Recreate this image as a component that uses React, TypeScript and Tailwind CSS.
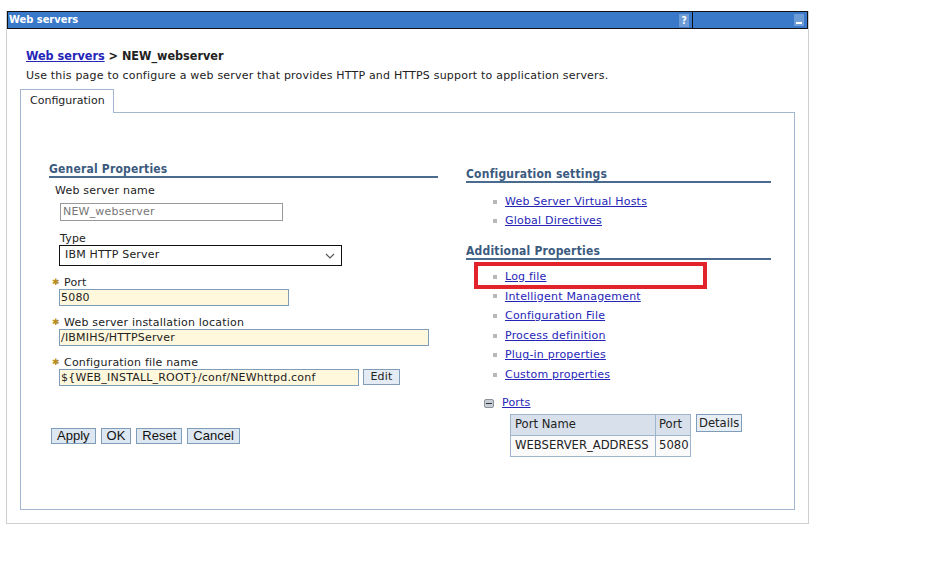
import React from "react";

const ui = { fontFamily: '"DejaVu Sans", Verdana, sans-serif' };
const cond = { fontFamily: '"DejaVu Sans Condensed", "DejaVu Sans", sans-serif' };
const btnFont = { fontFamily: '"Liberation Sans", Arial, sans-serif' };

function Req() {
  return <span className="inline-block w-[15px] pl-[3px] text-[9px] leading-none text-[#b58b1c]">✱</span>;
}

function Bullet() {
  return <span className="inline-block w-[4px] h-[4px] bg-[#b8b8b8] mr-[8px] align-middle" />;
}

function Heading({ children, className = "" }: { children: React.ReactNode; className?: string }) {
  return (
    <div
      style={cond}
      className={`text-[12px] font-bold leading-[14px] text-[#3b5a7e] border-b-2 border-[#4a6a90] ${className}`}
    >
      {children}
    </div>
  );
}

const configLinks = ["Web Server Virtual Hosts", "Global Directives"];
const addLinks = [
  "Log file",
  "Intelligent Management",
  "Configuration File",
  "Process definition",
  "Plug-in properties",
  "Custom properties",
];

function Btn({ children }: { children: React.ReactNode }) {
  return (
    <button
      style={btnFont}
      className="h-[16px] px-[5px] text-[13px] leading-[14px] text-[#111] bg-[#dde7f2] border border-[#7f9db9]"
    >
      {children}
    </button>
  );
}

export default function App() {
  return (
    <div style={ui} className="w-[948px] h-[568px] bg-white pt-[11px] pl-[6px] text-[#222] text-[11px] tracking-[0.2px]">
      <div className="w-[803px] border-x border-b border-[#cfcfcf] pb-[13px]">
        {/* Title bar */}
        <div
          style={cond}
          className="h-[18px] bg-[#3a79c9] border border-[#111] flex items-center text-white text-[11px] font-bold tracking-normal"
        >
          <span className="pl-[1px] flex-1">Web servers</span>
          <span className="w-[10px] h-[13px] bg-[#6c9bd6] text-[10px] leading-[13px] text-center mr-[3px]">?</span>
          <span className="w-[1px] h-full bg-[#111]" />
          <span className="w-[114px] flex justify-end pr-[3px]">
            <span className="w-[10px] h-[12px] bg-[#6c9bd6] flex items-end justify-center pb-[2px]">
              <span className="w-[6px] h-[2px] bg-white" />
            </span>
          </span>
        </div>

        <div className="pl-[13px]">
          <div style={cond} className="pl-[6px] pt-[19px] text-[12.5px] font-bold leading-[16px] tracking-normal">
            <a className="text-[#2525b8] underline">Web servers</a> &gt; NEW_webserver
          </div>
          <div className="pl-[6px] mt-[5px] leading-[14px]">
            Use this page to configure a web server that provides HTTP and HTTPS support to application servers.
          </div>

          {/* Tab */}
          <div className="mt-[5px] flex">
            <div className="w-[94px] h-[24px] border border-b-0 border-[#a3b8d0] bg-white relative top-[1px] leading-[22px] pl-[9px] tracking-normal">
              Configuration
            </div>
          </div>
          <div className="w-[775px] h-[398px] border border-[#a3b8d0] flex">
            {/* Left column */}
            <div className="w-[389px] ml-[28px] pt-[49px]">
              <Heading>General Properties</Heading>
              <div className="mt-[6px] pl-[6px] leading-[14px]">Web server name</div>
              <div className="mt-[5px] ml-[11px] w-[223px] h-[18px] border border-[#999] leading-[16px] pl-[2px] text-[#777]">
                NEW_webserver
              </div>
              <div className="mt-[11px] ml-[11px] leading-[13px]">Type</div>
              <div className="ml-[10px] w-[283px] h-[21px] border border-[#111] flex items-center justify-between pl-[5px] pr-[6px]">
                <span>IBM HTTP Server</span>
                <svg width="10" height="6" viewBox="0 0 10 6">
                  <path d="M1 1 L5 5 L9 1" fill="none" stroke="#555" strokeWidth="1.2" />
                </svg>
              </div>

              <div className="mt-[10px] leading-[13px] flex items-center"><Req />Port</div>
              <div className="ml-[10px] w-[230px] h-[17px] border border-[#7f9db9] bg-[#fff8dc] leading-[15px] pl-[1px]">
                5080
              </div>

              <div className="mt-[10px] leading-[13px] flex items-center"><Req />Web server installation location</div>
              <div className="ml-[10px] w-[370px] h-[17px] border border-[#7f9db9] bg-[#fff8dc] leading-[15px] pl-[1px]">
                /IBMIHS/HTTPServer
              </div>

              <div className="mt-[10px] leading-[13px] flex items-center"><Req />Configuration file name</div>
              <div className="ml-[10px] flex items-start gap-[4px]">
                <div className="w-[300px] h-[17px] border border-[#7f9db9] bg-[#fff8dc] leading-[15px] pl-[1px]">
                  {"${WEB_INSTALL_ROOT}/conf/NEWhttpd.conf"}
                </div>
                <button className="h-[16px] w-[37px] border border-[#7f9db9] bg-[#e4ebf3] text-[11px] leading-[14px]">
                  Edit
                </button>
              </div>

              <div className="mt-[42px] ml-[2px] flex gap-[5px] tracking-normal">
                <Btn>Apply</Btn>
                <Btn>OK</Btn>
                <Btn>Reset</Btn>
                <Btn>Cancel</Btn>
              </div>
            </div>

            {/* Right column */}
            <div className="w-[305px] ml-[28px] pt-[54px]">
              <Heading>Configuration settings</Heading>
              <ul className="mt-[9px] pl-[27px]">
                {configLinks.map((l) => (
                  <li key={l} className="h-[19px] leading-[19px] flex items-center">
                    <Bullet />
                    <a className="text-[#2525b8] underline">{l}</a>
                  </li>
                ))}
              </ul>
              <Heading className="mt-[14px]">Additional Properties</Heading>
              <ul className="mt-[7px] pl-[27px]">
                {addLinks.map((l, i) => (
                  <li key={l} className="relative h-[19.6px] leading-[19.6px] flex items-center">
                    <Bullet />
                    <a className="text-[#2525b8] underline">{l}</a>
                    {i === 0 && (
                      <span className="absolute left-[-19px] top-[-5px] w-[233px] h-[27px] border-[4px] border-[#e3232b]" />
                    )}
                  </li>
                ))}
              </ul>

              <div className="mt-[11px] ml-[18px] h-[16px] flex items-center">
                <span className="w-[10px] h-[9px] bg-[#c9ced6] border border-[#8b929c] rounded-[2px] flex items-center justify-center">
                  <span className="w-[6px] h-[1px] bg-[#333]" />
                </span>
                <a className="ml-[8px] text-[#2525b8] underline">Ports</a>
              </div>
              <div className="mt-[2px] ml-[44px] flex items-start gap-[5px] tracking-normal">
                <table className="border-collapse text-[11.6px]">
                  <tbody>
                    <tr className="bg-[#d8e0eb]">
                      <td className="w-[145px] h-[21px] border border-[#9fb4cd] pl-[4px] pt-[1px]">Port Name</td>
                      <td className="w-[35px] border border-[#9fb4cd] pl-[3px] pt-[1px]">Port</td>
                    </tr>
                    <tr className="bg-[#fafafa]">
                      <td className="h-[21px] border border-[#9fb4cd] pl-[4px] pt-[1px]">WEBSERVER_ADDRESS</td>
                      <td className="border border-[#9fb4cd] pl-[3px] pt-[1px]">5080</td>
                    </tr>
                  </tbody>
                </table>
                <button className="h-[18px] px-[2px] border border-[#7f9db9] bg-[#e8eef5] text-[11.6px] leading-[16px]">
                  Details
                </button>
              </div>
            </div>
          </div>
        </div>
      </div>
    </div>
  );
}
